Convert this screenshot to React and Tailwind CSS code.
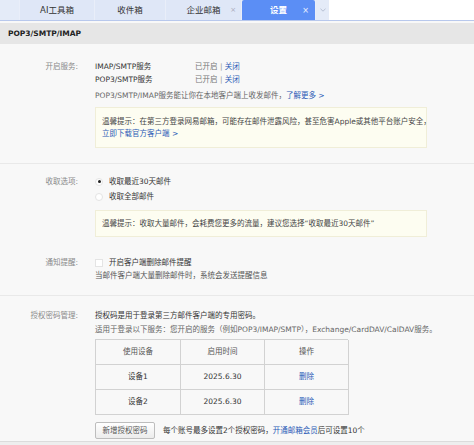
import React from "react";

function Label({ children }) {
  return <div className="text-right text-[#8a8a8a]">{children}</div>;
}

export default function App() {
  return (
    <div className="w-[474px] h-[445px] overflow-hidden bg-[#f8f8f8] font-[DejaVu_Sans,Noto_Sans_CJK_SC,sans-serif] text-[7.5px] leading-[13px] text-[#333]">
      {/* tab bar */}
      <div className="h-[21px] bg-white flex border-b border-[#b8c8ec]">
        <div className="flex bg-[#e9eef9] gap-px">
          <div className="w-[19px] bg-[#e4ebf8]" />
          <div className="w-[74px] bg-[#dfe7f7] flex items-center justify-center text-[8.5px] text-[#333]">AI工具箱</div>
          <div className="w-[70px] bg-[#dfe7f7] flex items-center justify-center text-[8.5px] text-[#333]">收件箱</div>
          <div className="w-[75px] bg-[#dfe7f7] flex items-center justify-center relative text-[8.5px] text-[#333]">
            企业邮箱
            <span className="absolute right-[5px] text-[7px] text-[#aab]">×</span>
          </div>
          <div className="w-[73px] bg-[#5b8ef5] rounded-t-[2px] flex items-center justify-center relative text-[8.5px] text-white font-bold">
            设置
            <span className="absolute right-[6px] text-[8px] text-white/90 font-normal">×</span>
          </div>
          <div className="w-[13px] bg-[#e4ebf8] flex items-center justify-center">
            <svg width="6" height="4" viewBox="0 0 6 4"><path d="M0.5 0.8 L3 3.2 L5.5 0.8" fill="none" stroke="#aab4c8" strokeWidth="0.8" /></svg>
          </div>
        </div>
      </div>
      {/* header */}
      <div className="mt-[2px] h-[21px] bg-[#e6e6e6] flex items-center pl-[8px] font-bold text-[7.5px] text-[#222]">POP3/SMTP/IMAP</div>

      {/* section 1 */}
      <div className="grid grid-cols-[78px_1fr] gap-x-[17px] pt-[16px] pb-[15px] border-b border-[#e9e9e9]">
        <Label>开启服务:</Label>
        <div>
          <div className="flex"><span className="w-[100px]">IMAP/SMTP服务</span><span className="text-[#777]">已开启 <span className="text-[#999]">|</span> <span className="text-[#2a5ab6]">关闭</span></span></div>
          <div className="flex"><span className="w-[100px]">POP3/SMTP服务</span><span className="text-[#777]">已开启 <span className="text-[#999]">|</span> <span className="text-[#2a5ab6]">关闭</span></span></div>
          <div className="mt-[3px] text-[#666]">POP3/SMTP/IMAP服务能让你在本地客户端上收发邮件，<span className="text-[#2a5ab6]">了解更多 &gt;</span></div>
          <div className="mt-[5px] w-[332px] bg-[#fdfdf1] border border-[#f0eed8] pl-[6px] pt-[8px] pb-[7px] leading-[12px] text-[#444]">
            <div className="whitespace-nowrap">温馨提示：在第三方登录网易邮箱，可能存在邮件泄露风险，甚至危害Apple或其他平台账户安全，</div>
            <div className="text-[#2a5ab6]">立即下载官方客户端 &gt;</div>
          </div>
        </div>
      </div>

      {/* section 2 */}
      <div className="grid grid-cols-[78px_1fr] gap-x-[17px] pt-[10px] pb-[13px] border-b border-[#e9e9e9] leading-[15px]">
        <Label>收取选项:</Label>
        <div>
          <div className="flex items-center gap-[6px]">
            <span className="w-[8px] h-[8px] rounded-full bg-white border border-[#e4e4e4] flex items-center justify-center"><span className="w-[3px] h-[3px] rounded-full bg-[#222]" /></span>
            <span>收取最近30天邮件</span>
          </div>
          <div className="flex items-center gap-[6px]">
            <span className="w-[8px] h-[8px] rounded-full bg-white border border-[#e4e4e4]" />
            <span>收取全部邮件</span>
          </div>
          <div className="mt-[6px] w-[332px] h-[27px] bg-[#fdfdf1] border border-[#f0eed8] pl-[6px] flex items-center text-[#444]">
            温馨提示：收取大量邮件，会耗费您更多的流量，建议您选择“收取最近30天邮件”
          </div>
        </div>
        <div className="col-span-2 h-[18px]" />
        <Label>通知提醒:</Label>
        <div>
          <div className="flex items-center gap-[6px]">
            <span className="w-[8px] h-[8px] bg-white border border-[#e4e4e4]" />
            <span>开启客户端删除邮件提醒</span>
          </div>
          <div className="text-[#555] leading-[12px]">当邮件客户端大量删除邮件时，系统会发送提醒信息</div>
        </div>
      </div>

      {/* section 3 */}
      <div className="grid grid-cols-[78px_1fr] gap-x-[17px] pt-[13px] pb-[2px] border-b border-[#dcdcdc] leading-[14px]">
        <Label>授权密码管理:</Label>
        <div>
          <div>授权码是用于登录第三方邮件客户端的专用密码。</div>
          <div className="text-[#666]">适用于登录以下服务：您开启的服务（例如POP3/IMAP/SMTP），Exchange/CardDAV/CalDAV服务。</div>
          <div className="mt-[2px] w-[253px] grid grid-cols-[85px_84px_84px] border-l border-t border-[#d2d2d2] text-center">
            <div className="h-[25px] flex items-center justify-center border-r border-b border-[#d2d2d2] text-[#555]">使用设备</div>
            <div className="h-[25px] flex items-center justify-center border-r border-b border-[#d2d2d2] text-[#555]">启用时间</div>
            <div className="h-[25px] flex items-center justify-center border-r border-b border-[#d2d2d2] text-[#555]">操作</div>
            <div className="h-[25px] flex items-center justify-center border-r border-b border-[#d2d2d2]">设备1</div>
            <div className="h-[25px] flex items-center justify-center border-r border-b border-[#d2d2d2]">2025.6.30</div>
            <div className="h-[25px] flex items-center justify-center border-r border-b border-[#d2d2d2] text-[#2a5ab6]">删除</div>
            <div className="h-[25px] flex items-center justify-center border-r border-b border-[#d2d2d2]">设备2</div>
            <div className="h-[25px] flex items-center justify-center border-r border-b border-[#d2d2d2]">2025.6.30</div>
            <div className="h-[25px] flex items-center justify-center border-r border-b border-[#d2d2d2] text-[#2a5ab6]">删除</div>
          </div>
          <div className="mt-[7px] flex items-center gap-[8px]">
            <button className="w-[60px] h-[17px] rounded-[2px] border border-[#bdbdbd] bg-gradient-to-b from-white to-[#ececec] text-[#555] text-[7.5px] leading-none">新增授权密码</button>
            <span>每个账号最多设置2个授权密码，<span className="text-[#2a5ab6]">开通邮箱会员</span>后可设置10个</span>
          </div>
        </div>
      </div>
      <div className="h-[10px] bg-[#eeeeee]" />
    </div>
  );
}
